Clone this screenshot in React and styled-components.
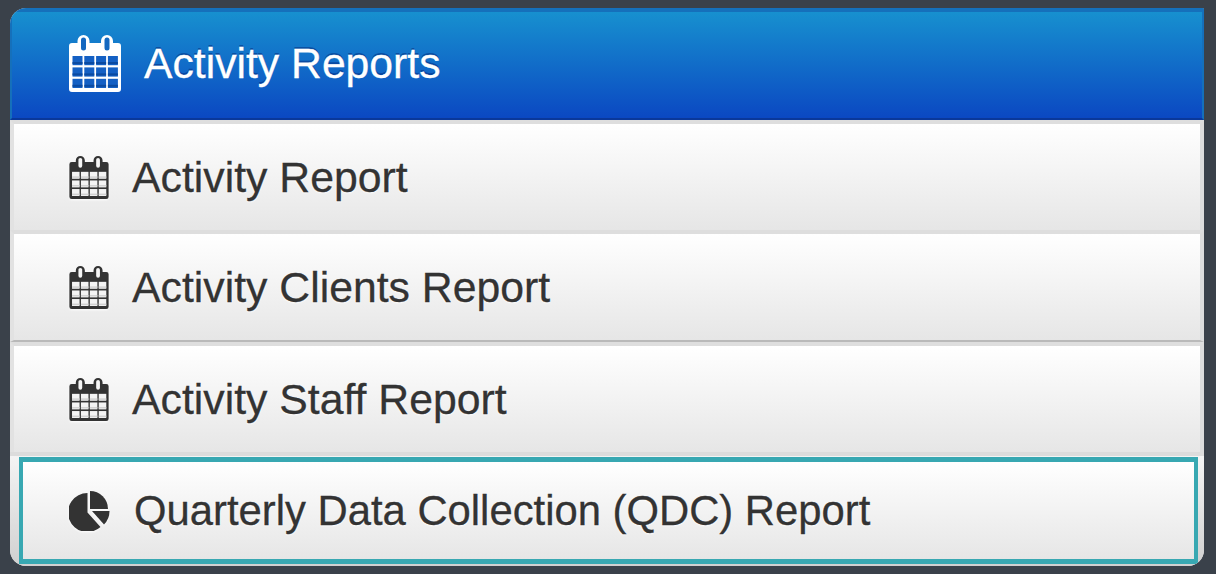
import React from "react";
import styled, { createGlobalStyle } from "styled-components";

const Global = createGlobalStyle`
  html, body {
    margin: 0;
    padding: 0;
    height: 100%;
    background: #3a414a;
    overflow: hidden;
  }
`;

const Page = styled.div`
  width: 1216px;
  height: 574px;
  box-sizing: border-box;
  padding: 8px 12px 8px 10px;
  font-family: "Liberation Sans", Arial, sans-serif;
`;

const Panel = styled.div`
  height: 100%;
  display: flex;
  flex-direction: column;
  border-radius: 16px 2px 16px 16px;
  overflow: hidden;
  background: #dcdcdc;
`;

const Header = styled.div`
  height: 112px;
  box-sizing: border-box;
  flex: none;
  display: flex;
  align-items: center;
  gap: 23px;
  padding: 0 0 4px 57px;
  border-top: 4px solid #1570bb;
  border-left: 2px solid #1570bb;
  border-right: 2px solid #1570bb;
  border-bottom: 2px solid #0a389a;
  background: linear-gradient(to bottom, #1790cf, #0b48c2);
  color: #fff;
  font-size: 42.7px;
  -webkit-text-stroke: 0.3px #fff;
  text-shadow: 0 -2px 0 rgba(0, 30, 110, 0.45);
`;

const Row = styled.div`
  height: ${(p) => p.$height}px;
  flex: none;
  box-sizing: border-box;
  display: flex;
  align-items: center;
  gap: 23px;
  padding-left: 55px;
  border-top: 4px solid #dedede;
  border-left: 4px solid #e2e2e2;
  border-right: 4px solid #dcdcdc;
  border-bottom: ${(p) => (p.$edge ? `2px solid ${p.$edge}` : "none")};
  background: linear-gradient(to bottom, #ffffff, #e6e6e6);
  color: #333;
  font-size: 42.75px;
  -webkit-text-stroke: 0.3px #333;
  text-shadow: 0 1px 2px #fff;
`;

const FocusWrap = styled.div`
  flex: 1;
  display: flex;
  padding: 1px 6px 2px 9px;
  border-top: 4px solid #dcdcdc;
  background: linear-gradient(to bottom, #f4f4f4, #d0d0d0);
`;

const FocusRow = styled.div`
  flex: 1;
  box-sizing: border-box;
  display: flex;
  align-items: center;
  gap: 24px;
  padding-left: 46px;
  border-style: solid;
  border-color: #38a8b2;
  border-width: 5px 4px;
  background: linear-gradient(to bottom, #ffffff, #e6e6e6);
  color: #333;
  font-size: 41.8px;
  -webkit-text-stroke: 0.3px #333;
  text-shadow: 0 1px 2px #fff;
`;

const IconBox = styled.svg`
  flex: none;
  display: block;
  filter: ${(p) => p.$glow};
`;

const CalendarIcon = ({ width, height, light }) => {
  const body = light ? "#fff" : "#333";
  const slot = light ? "#1468c0" : "#f6f6f6";
  const cell = light ? "#1460c4" : "#f4f4f4";
  const band = light ? "#0b4aa0" : "#d2d2d2";
  const cells = [];
  for (let r = 0; r < 3; r++) {
    for (let c = 0; c < 4; c++) {
      const x = 3.5 + c * 11.8;
      const y = 21 + r * 11.4;
      cells.push(
        <g key={`${r}-${c}`}>
          <rect x={x} y={y} width="10" height="9.2" fill={cell} />
          <rect x={x} y={y + 6} width="10" height="2" fill={band} />
        </g>
      );
    }
  }
  return (
    <IconBox
      width={width}
      height={height}
      viewBox="0 0 52 57"
      $glow={light ? "none" : "drop-shadow(0 1px 1px #fff)"}
    >
      <path
        fill={body}
        d="M3 8h5.5V6a6 6 0 0 1 12 0v2h11.5V6a6 6 0 0 1 12 0v2H49a3 3 0 0 1 3 3v43a3 3 0 0 1-3 3H3a3 3 0 0 1-3-3V11a3 3 0 0 1 3-3z"
      />
      <rect x="12" y="2.5" width="5" height="13" rx="2.5" fill={slot} />
      <rect x="35.5" y="2.5" width="5" height="13" rx="2.5" fill={slot} />
      {cells}
    </IconBox>
  );
};

const PieIcon = () => (
  <IconBox width="41" height="40" viewBox="0 0 41 40" $glow="drop-shadow(0 1px 1px #fff)">
    <path fill="#333" d="M18.5 2V21.5L31.5 36A19.5 19.5 0 1 1 18.5 2Z" />
    <path fill="#333" d="M21 0A18 18 0 0 1 39 18H21Z" />
    <path fill="#333" d="M23 20H40.5A19 19 0 0 1 35 33.5Z" />
  </IconBox>
);

export default function App() {
  return (
    <Page>
      <Global />
      <Panel>
        <Header>
          <CalendarIcon width={52} height={57} light />
          <span>Activity Reports</span>
        </Header>
        <Row $height={110}>
          <CalendarIcon width={40} height={43} />
          <span>Activity Report</span>
        </Row>
        <Row $height={112} $edge="#b9b9b9">
          <CalendarIcon width={40} height={43} />
          <span>Activity Clients Report</span>
        </Row>
        <Row $height={110}>
          <CalendarIcon width={40} height={43} />
          <span>Activity Staff Report</span>
        </Row>
        <FocusWrap>
          <FocusRow>
            <PieIcon />
            <span>Quarterly Data Collection (QDC) Report</span>
          </FocusRow>
        </FocusWrap>
      </Panel>
    </Page>
  );
}
